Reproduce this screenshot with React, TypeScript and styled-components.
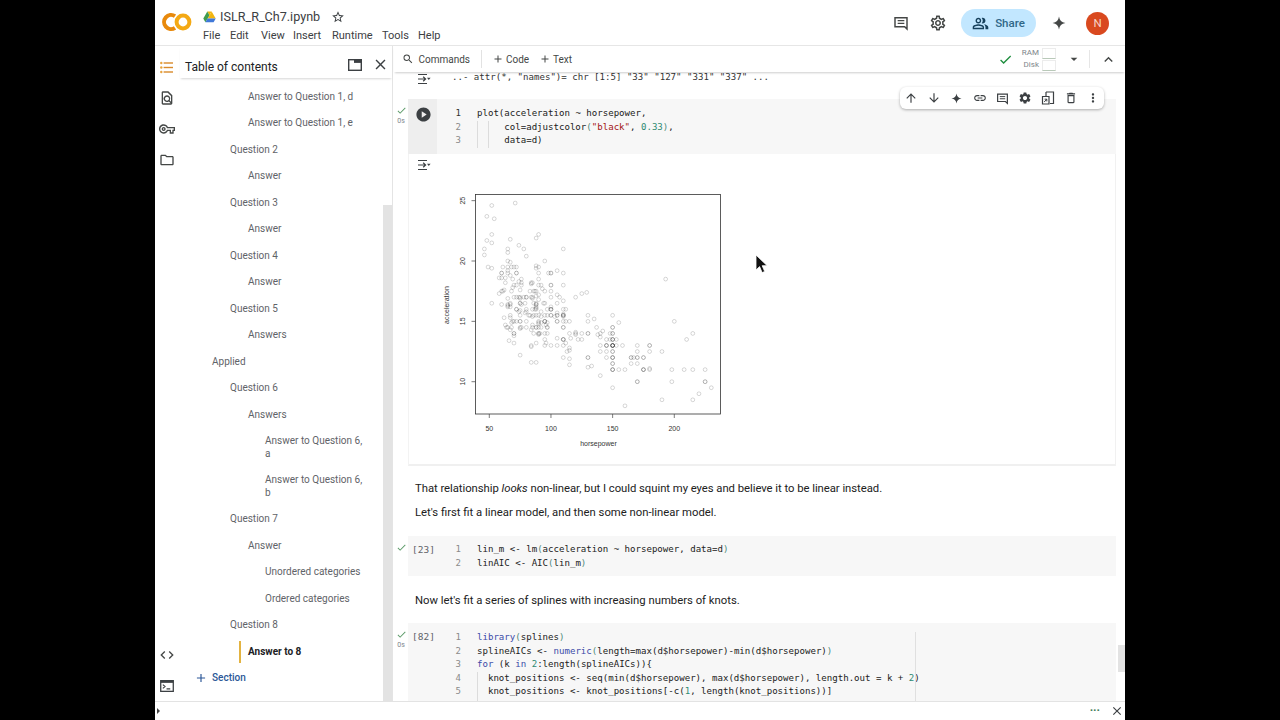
import React from 'react'
import styled, { createGlobalStyle } from 'styled-components'
import {
  MdAdd,
  MdArrowDownward,
  MdArrowDropDown,
  MdArrowUpward,
  MdCheck,
  MdClose,
  MdCode,
  MdKeyboardArrowUp,
  MdLink,
  MdMoreVert,
  MdOutlineDelete,
  MdOutlineFindInPage,
  MdOutlineFolder,
  MdOutlinePeopleAlt,
  MdOutlineSettings,
  MdOutlineVpnKey,
  MdPlayCircle,
  MdSearch,
  MdSettings,
  MdStarBorder
} from 'react-icons/md'

const UI_FONT = `Roboto, "Liberation Sans", sans-serif`
const CODE_FONT = `"DejaVu Sans Mono", "Liberation Mono", monospace`

const GlobalStyle = createGlobalStyle`
  html, body {
    margin: 0;
    height: 100%;
    background: #000;
    overflow: hidden;
  }
`

const Page = styled.div`
  width: 970px;
  height: 720px;
  margin-left: 155px;
  background: #fff;
  display: flex;
  flex-direction: column;
  font-family: ${UI_FONT};
  color: #202124;
  overflow: hidden;
`

/* ---------- header ---------- */

const Header = styled.header`
  height: 46px;
  flex: none;
  display: flex;
  align-items: flex-start;
  border-bottom: 1px solid #e6e6e6;
  box-sizing: border-box;
`
const LogoSlot = styled.div`
  width: 48px;
  flex: none;
  padding: 12px 0 0 7px;
  box-sizing: border-box;
`
const TitleColumn = styled.div`
  display: flex;
  flex-direction: column;
  padding-top: 8px;
`
const TitleRow = styled.div`
  display: flex;
  align-items: center;
  height: 17px;
  gap: 4px;
`
const FileName = styled.span`
  font-size: 12.6px;
  color: #3c4043;
  width: 102px;
`
const StarIcon = styled(MdStarBorder)`
  font-size: 14px;
  color: #3c4043;
  margin-left: 5px;
`
const MenuBar = styled.nav`
  display: flex;
  margin-top: 4px;
`
const MenuItem = styled.span<{ $w: number }>`
  width: ${p => p.$w}px;
  font-size: 11px;
  line-height: 14px;
  color: #3c4043;
`
const HeaderActions = styled.div`
  margin-left: auto;
  display: flex;
  align-items: center;
  height: 46px;
  padding-right: 16px;
`
const HeaderIcon = styled.span<{ $mr: number }>`
  display: inline-flex;
  color: #444746;
  font-size: 18px;
  margin-right: ${p => p.$mr}px;
`
const ShareButton = styled.div`
  width: 75px;
  height: 28px;
  border-radius: 14px;
  background: #c2e7ff;
  display: flex;
  align-items: center;
  justify-content: center;
  gap: 6px;
  font-size: 11.5px;
  font-weight: 500;
  color: #2f6788;
  margin-right: 16px;
  svg {
    font-size: 17px;
    color: #16405c;
  }
`
const Avatar = styled.div`
  width: 23px;
  height: 23px;
  border-radius: 50%;
  background: #d9491f;
  color: #f6d5c8;
  font-size: 11.5px;
  display: flex;
  align-items: center;
  justify-content: center;
  margin-left: 20px;
`

/* ---------- workspace ---------- */

const Workspace = styled.div`
  flex: 1;
  min-height: 0;
  display: flex;
`
const Rail = styled.aside`
  width: 25px;
  flex: none;
  display: flex;
  flex-direction: column;
  align-items: center;
  gap: 15px;
  padding: 13px 2px 7px 0;
  box-sizing: border-box;
  color: #444746;
  font-size: 16px;
`
const RailIcon = styled.span`
  display: flex;
  width: 16px;
  height: 16px;
  align-items: center;
  justify-content: center;
  color: #444746;
`
const RailBottom = styled.div`
  margin-top: auto;
  display: flex;
  flex-direction: column;
  gap: 15px;
`
const TocPanel = styled.section`
  width: 213px;
  flex: none;
  display: flex;
  flex-direction: column;
  border-right: 1px solid #e4e4e4;
  box-sizing: border-box;
`
const TocHeader = styled.div`
  height: 32px;
  flex: none;
  display: flex;
  align-items: center;
  padding: 9px 0 0 5px;
  box-sizing: border-box;
  box-shadow: 0 2px 2px -1px rgba(0, 0, 0, 0.16);
  position: relative;
  z-index: 1;
`
const TocTitle = styled.span`
  font-size: 12px;
  color: #202124;
  margin-right: auto;
`
const TocAction = styled.span<{ $mr: number }>`
  display: inline-flex;
  font-size: 17px;
  color: #3c4043;
  margin: -4px ${p => p.$mr}px 0 0;
`
const TocBody = styled.div`
  flex: 1;
  min-height: 0;
  display: flex;
`
const TocList = styled.div`
  width: 203px;
  flex: none;
  padding: 5px 19px 0 0;
  box-sizing: border-box;
`
const TocItem = styled.div<{ $level: number; $double?: boolean }>`
  min-height: ${p => (p.$double ? 39 : 26.5)}px;
  box-sizing: border-box;
  padding-left: ${p => [32, 50, 68, 85][p.$level]}px;
  display: flex;
  align-items: center;
  font-size: 10px;
  line-height: 13px;
  color: #5f6368;
`
const ActiveLabel = styled.span`
  font-weight: 700;
  color: #202124;
  border-left: 2px solid #e3b341;
  margin: 1px 0 0 -9px;
  padding-left: 7px;
  line-height: 22px;
`
const AddSection = styled.div`
  height: 26px;
  display: flex;
  align-items: center;
  gap: 4px;
  padding-left: 14px;
  font-size: 10px;
  font-weight: 500;
  color: #2b5797;
  svg {
    font-size: 14px;
  }
`
const TocScrollTrack = styled.div`
  width: 9px;
  flex: none;
  padding-top: 127px;
  box-sizing: border-box;
`
const TocScrollThumb = styled.div`
  height: 100%;
  background: #e3e3e3;
`

/* ---------- notebook ---------- */

const Notebook = styled.main`
  flex: 1;
  min-width: 0;
  display: flex;
  flex-direction: column;
  position: relative;
  margin-left: 1px;
`
const Toolbar = styled.div`
  height: 26px;
  flex: none;
  display: flex;
  align-items: center;
  padding: 0 8px;
  box-shadow: 0 2px 2px -1px rgba(0, 0, 0, 0.2);
  position: relative;
  z-index: 2;
  background: #fff;
  font-size: 10px;
  color: #444746;
`
const ToolButton = styled.span<{ $w: number }>`
  display: inline-flex;
  align-items: center;
  gap: 2px;
  width: ${p => p.$w}px;
  svg {
    font-size: 12px;
  }
`
const ToolDivider = styled.span`
  width: 1px;
  height: 18px;
  background: #e2e2e2;
  margin-right: 10px;
`
const RuntimeStatus = styled.div`
  margin-left: auto;
  display: flex;
  align-items: center;
  color: #1e8e3e;
`
const Meters = styled.div`
  display: grid;
  grid-template-columns: 18px 14px;
  column-gap: 3px;
  row-gap: 1px;
  margin-left: 8px;
  font-size: 8px;
  line-height: 10px;
  color: #80868b;
  text-align: right;
`
const MeterBar = styled.span`
  height: 9px;
  border: 1px solid #ececec;
  border-bottom-color: #b9c9b9;
`
const ToolCaret = styled.span`
  display: inline-flex;
  font-size: 16px;
  color: #444746;
  margin: 0 7px 0 10px;
`
const ChevronSlot = styled.span`
  display: inline-flex;
  align-items: center;
  justify-content: center;
  height: 18px;
  border-left: 1px solid #e6e6e6;
  padding-left: 10px;
  font-size: 17px;
  color: #444746;
`
const Scroller = styled.div`
  flex: 1;
  min-height: 0;
  overflow: hidden;
`
const OutputStub = styled.div`
  height: 27px;
  display: flex;
  align-items: flex-start;
  padding-left: 23px;
  font-family: ${CODE_FONT};
  font-size: 9.08px;
  line-height: 11px;
  color: #333;
  white-space: pre;
`
const OutputToggle = styled.svg`
  width: 14px;
  height: 14px;
  flex: none;
  margin-right: 21px;
`
const CellRow = styled.div`
  display: flex;
`
const CellStatus = styled.div`
  width: 14px;
  flex: none;
  display: flex;
  flex-direction: column;
  align-items: center;
  padding-top: 5px;
  color: #5b9a68;
  font-size: 11px;
  margin-top: 1px;
`
const RunTime = styled.span`
  font-size: 7px;
  line-height: 7px;
  color: #80868b;
  margin-top: 2px;
`
const CellBody = styled.div`
  width: 708px;
  display: flex;
  background: #f7f7f7;
  position: relative;
`
const CellGutter = styled.div<{ $dark?: boolean }>`
  width: 29px;
  flex: none;
  box-sizing: border-box;
  background: ${p => (p.$dark ? '#eeeeee' : 'transparent')};
  font-family: ${CODE_FONT};
  font-size: 9.5px;
  color: #5f6368;
  padding: 7px 0 0 4px;
  line-height: 13.5px;
  white-space: pre;
  svg {
    display: block;
    font-size: 17px;
    color: #3c4043;
    margin: 0 0 0 2.5px;
  }
`
const LineNumbers = styled.div`
  width: 24px;
  flex: none;
  text-align: right;
  color: #8a8a8a;
  font-family: ${CODE_FONT};
  font-size: 9px;
  line-height: 13.5px;
`
const ActiveNumber = styled.div`
  color: #333;
`
const CodeBlock = styled.pre`
  margin: 0 0 0 16px;
  flex: 1;
  font-family: ${CODE_FONT};
  font-size: 9.08px;
  line-height: 13.5px;
  color: #212121;
`
const CodeArea = styled.div<{ $pt: number; $pb: number }>`
  display: flex;
  flex: 1;
  padding: ${p => p.$pt}px 0 ${p => p.$pb}px;
  overflow: hidden;
`
const RulerLine = styled.span`
  position: absolute;
  left: 507px;
  top: 9px;
  bottom: 0;
  width: 1px;
  background: #e0e0e0;
`
const Guide = styled.span`
  display: inline-block;
  width: 2ch;
  height: 13.5px;
  vertical-align: top;
  box-shadow: inset 1px 0 0 #dcdcdc;
`
const Kw = styled.span`
  color: #3b4ba8;
`
const Str = styled.span`
  color: #a31515;
`
const Num = styled.span`
  color: #2e8a72;
`
const Br = styled.span`
  color: #4f8a7a;
`
const OutputPanel = styled.div`
  width: 708px;
  height: 312px;
  box-sizing: border-box;
  border-right: 1px solid #f1f1f1;
  border-left: 1px solid #f3f3f3;
  border-bottom: 2px solid #f0f0f0;
  margin-left: 14px;
  padding: 4px 0 0 8px;
  display: flex;
  flex-direction: column;
`
const PlotFrame = styled.svg`
  display: block;
  margin: 13px 0 0 26px;
  flex: none;
`
const Prose = styled.div<{ $pt: number; $pb: number }>`
  padding: ${p => p.$pt}px 0 ${p => p.$pb}px 21px;
  font-size: 11.3px;
  line-height: 16px;
  color: #212121;
`
const ProseLine = styled.p<{ $tight?: boolean }>`
  margin: 0 0 8px;
  letter-spacing: ${p => (p.$tight ? '-0.04px' : 'normal')};
  &:last-child {
    margin-bottom: 0;
  }
`
const CellToolbar = styled.div`
  position: absolute;
  top: 41px;
  right: 21px;
  width: 204px;
  height: 22px;
  box-sizing: border-box;
  background: #fff;
  border-radius: 6px;
  box-shadow: 0 1px 3px rgba(0, 0, 0, 0.3);
  display: grid;
  grid-template-columns: repeat(9, 22.75px);
  align-items: center;
  justify-items: center;
  color: #3c4043;
  font-size: 14px;
  z-index: 3;
`
const ToolbarGlyph = styled.span`
  display: inline-flex;
`
const NotebookScrollThumb = styled.div`
  position: absolute;
  right: 0;
  top: 599px;
  width: 7px;
  height: 27px;
  background: #e3e3e3;
`
const PointerOverlay = styled.svg`
  position: absolute;
  left: 361px;
  top: 208px;
  z-index: 4;
`

/* ---------- status bar ---------- */

const StatusBar = styled.footer`
  height: 19px;
  flex: none;
  display: flex;
  align-items: center;
  border-top: 1px solid #e3e3e3;
  box-sizing: border-box;
  padding: 0 1px 0 2px;
`
const StatusCaret = styled.span`
  width: 0;
  height: 0;
  border-left: 3px solid #444;
  border-top: 3px solid transparent;
  border-bottom: 3px solid transparent;
`
const StatusDots = styled.span`
  margin-left: auto;
  color: #3d7a58;
  font-size: 8px;
  font-weight: 700;
  letter-spacing: 0.5px;
  margin-right: 10px;
  line-height: 10px;
`
const StatusClose = styled.span`
  display: inline-flex;
  font-size: 14px;
  color: #3c4043;
`

/* ---------- drawings ---------- */

const ColabLogo = () => (
  <svg width="30" height="20" viewBox="0 0 30 20">
    <path d="M13 4.2a7 7 0 1 0 0 11.6" fill="none" stroke="#e8890c" strokeWidth="4" />
    <circle cx="21" cy="10" r="6.4" fill="none" stroke="#f4a914" strokeWidth="4" />
  </svg>
)

const DriveIcon = () => (
  <svg width="13" height="12" viewBox="0 0 13 12">
    <polygon points="4.3,0.5 8.7,0.5 6.5,4.4 " fill="#f2b50f" />
    <polygon points="4.3,0.5 0.3,7.6 2.4,11.2 6.5,4.4" fill="#3f9c4f" />
    <polygon points="8.7,0.5 12.7,7.6 4.6,7.6 6.5,4.4" fill="#f2b50f" />
    <polygon points="2.4,11.2 10.6,11.2 12.7,7.6 4.5,7.6" fill="#3f78d8" />
  </svg>
)

const Spark = ({ size }: { size: number }) => (
  <svg width={size} height={size} viewBox="0 0 24 24">
    <path d="M12 1C12.8 7.5 16.5 11.2 23 12C16.5 12.8 12.8 16.5 12 23C11.2 16.5 7.5 12.8 1 12C7.5 11.2 11.2 7.5 12 1Z" fill="currentColor" />
  </svg>
)

const CommentIcon = ({ size }: { size: number }) => (
  <svg width={size} height={size} viewBox="0 0 24 24" fill="none" stroke="currentColor" strokeWidth="2.2">
    <path d="M3 4h18v17l-3.5-3.5H3z" />
    <path d="M7 8.5h10M7 12.5h10" strokeWidth="1.8" />
  </svg>
)

const ListIcon = () => (
  <svg width="13" height="13" viewBox="0 0 13 13" fill="#e8a33d">
    <circle cx="1.3" cy="2" r="1.2" />
    <circle cx="1.3" cy="6.5" r="1.2" />
    <circle cx="1.3" cy="11" r="1.2" />
    <rect x="3.6" y="1.3" width="9.4" height="1.4" fill="#d98a2b" />
    <rect x="3.6" y="5.8" width="9.4" height="1.4" fill="#d98a2b" />
    <rect x="3.6" y="10.3" width="9.4" height="1.4" fill="#d98a2b" />
  </svg>
)

const TerminalIcon = () => (
  <svg width="14" height="12" viewBox="0 0 15 13">
    <rect x="0.7" y="0.7" width="13.6" height="11.6" fill="none" stroke="#3c4043" strokeWidth="1.4" />
    <rect x="0.7" y="0.7" width="13.6" height="2.4" fill="#3c4043" />
    <path d="M3 5l2.4 2L3 9M7 9.6h4" fill="none" stroke="#3c4043" strokeWidth="1.2" />
  </svg>
)

const TabIcon = () => (
  <svg width="14" height="12" viewBox="0 0 14 12">
    <rect x="0.7" y="0.7" width="12.6" height="10.6" fill="none" stroke="#3c4043" strokeWidth="1.4" />
    <rect x="6" y="0.7" width="7.3" height="3.2" fill="#3c4043" />
  </svg>
)

const MirrorIcon = () => (
  <svg width="14" height="14" viewBox="0 0 14 14" fill="none" stroke="currentColor" strokeWidth="1.2">
    <path d="M5 1h7.5v11.5H9M5 1v4.5M1.5 5.5H8V13H1.5z" />
    <path d="M3.2 11l2.6-2.8M3.6 8.2h2.2v2.2" strokeWidth="1" />
  </svg>
)

const OutputIcon = () => (
  <OutputToggle viewBox="0 0 14 14" fill="none" stroke="#3c4043" strokeWidth="1.2">
    <path d="M1 2.5h9M1 11.5h9M1 7h7.5M6.2 4.7L8.6 7 6.2 9.3" />
    <path d="M10 5.8h3.6L11.8 8z" fill="#3c4043" stroke="none" />
  </OutputToggle>
)

/* ---------- data ---------- */

const MENU: [string, number][] = [
  ['File', 27],
  ['Edit', 31],
  ['View', 32],
  ['Insert', 39],
  ['Runtime', 50],
  ['Tools', 36],
  ['Help', 30]
]

const TOC: { text: string; level: number; double?: boolean; active?: boolean }[] = [
  { text: 'Answer to Question 1, d', level: 2 },
  { text: 'Answer to Question 1, e', level: 2 },
  { text: 'Question 2', level: 1 },
  { text: 'Answer', level: 2 },
  { text: 'Question 3', level: 1 },
  { text: 'Answer', level: 2 },
  { text: 'Question 4', level: 1 },
  { text: 'Answer', level: 2 },
  { text: 'Question 5', level: 1 },
  { text: 'Answers', level: 2 },
  { text: 'Applied', level: 0 },
  { text: 'Question 6', level: 1 },
  { text: 'Answers', level: 2 },
  { text: 'Answer to Question 6, a', level: 3, double: true },
  { text: 'Answer to Question 6, b', level: 3, double: true },
  { text: 'Question 7', level: 1 },
  { text: 'Answer', level: 2 },
  { text: 'Unordered categories', level: 3 },
  { text: 'Ordered categories', level: 3 },
  { text: 'Question 8', level: 1 },
  { text: 'Answer to 8', level: 2, active: true }
]

// horsepower,acceleration as read off the plot
const POINTS = `130,12 165,11.5 150,11 150,12 140,10.5 198,10 220,9 215,8.5 225,10 190,8.5 170,10 160,8 150,9.5 225,10 95,15 95,15.5
97,15.5 85,16 88,14.5 46,20.5 87,17.5 90,14.5 95,17.5 113,12.5 90,15 215,14 200,15 210,13.5 193,18.5 88,14.5 90,15.5 95,14 100,13
105,15.5 100,15.5 88,15.5 100,15.5 165,12 175,11 153,13.5 150,13.5 180,11 170,11.5 175,12 110,12 72,19 86,14 90,14 70,14 76,14.5 65,14.5
69,15 60,19 70,18 95,20 80,17 54,23.5 90,19.5 86,16.5 165,12 175,12 150,13 153,13 150,14.5 208,11 155,11 160,11 190,12.5 97,14.5 150,13
130,14 140,12.5 150,13 112,16 76,18 87,16 69,18.5 86,15.5 92,14.5 97,14 80,15 88,16 175,11 150,11.5 145,13 137,14.5 150,14 198,11
150,12.5 158,13 150,13 215,11 225,11 175,11 105,16.5 100,18 100,16 88,16.5 95,15 46,21 150,13 167,12 170,12 180,13 100,16 88,17.5
72,19 94,16.5 90,18.5 85,14.5 107,17 90,14 145,13.5 230,9.5 49,19.5 75,15.5 91,14 112,15 150,11 110,13.5 122,13.5 180,12.5 95,16.5 100,17
100,16 67,15.5 80,16 65,19 75,15 100,19 110,18 105,15 140,13 150,11.5 150,12 170,12.5 130,14 150,12.5 95,13.5 90,19 97,16 52,21.5 67,21.8
65,19.5 75,14.5 75,16.5 100,17.5 110,15 105,17.2 140,14 150,13.5 150,14 170,13 145,12.5 150,12 148,14 130,15 110,13 105,15.5 72,18 72,16
170,12 145,13 150,14.5 148,13.5 110,16 105,15 110,15.5 95,15 110,14.5 110,13.5 72,17 60,19 48,21.7 52,22.2 61,17.5 75,16.5 75,17 75,16.9
97,14.9 93,17.7 67,15.3 95,13 105,13 72,15 72,16 170,10 145,12 150,13.5 180,11.1 130,12 150,11 68,19.5 80,14.5 58,18.6 96,13.2 70,19.5 145,13
110,19 90,18 110,15.5 52,16.5 83,15.5 70,14 129,17.4 120,17 110,15.5 150,13 130,15.5 83,17.5 100,18 78,21 65,16.2 69,17.8 61,19.5 70,15
63,14.7 67,16.4 78,17 97,14.5 110,13.5 110,21 48,23.7 66,13.4 52,24.6 70,17 60,16.4 110,14.5 125,14 115,14 135,15.2 85,16.9 88,11.6 90,14.9
88,13.2 84,11.6 84,12.9 92,15.8 110,15.4 84,13 58,17.3 64,14.5 60,17.5 67,16.2 65,16.3 62,15.3 68,14.9 63,18.6 65,16.4 65,16.9 74,17 75,15.9
75,14.4 100,16.2 74,15.8 80,17 76,16.4 116,13.6 120,13.9 110,15.6 105,15.7 88,16.4 85,15.4 88,16.1 88,16.4 88,19.4 85,17 84,17 90,14.8 92,14.9
74,18.3 68,14.5 68,17.5 63,18.2 70,13.8 88,19.6 75,12.2 70,13.2 67,19.9 67,14.3 67,16.5 110,16.7 85,14.7 92,15.4 112,13.2 96,14.7 84,18.1 90,13.9
86,17.5 52,19.4 84,14.3 79,15.7 82,15.5 71,24.8 90,22.2 88,21.9 74,21.3 67,18.8 65,20.7 76,18.5 88,16.2 65,21 80,20.4 60,18.6 92,18 79,16.5
65,19.2 72,19.5 115,12.6 90,17.2 88,17.1 90,16.8 115,12.8 76,18.2 75,17.6 62,17.6 150,15.5 105,13.6 103,15.4 125,17.3 133,11.3 105,19.2 80,15.8
115,11.4 84,18.2 98,19 130,11.2 115,11.9 120,14.1 120,14 180,13 115,15 142,14.2 125,13.5 140,13.7 155,14.9 138,13.9 100,19 85,18.2 65,20 75,15`
  .split(/\s+/)
  .map(pair => pair.split(',').map(Number))

const hpX = (hp: number) => 46.3 + (hp - 50) * 1.2333
const accY = (acc: number) => 196.7 - (acc - 10) * 12.07
const BOX = { x: 32.5, y: 9.5, w: 245, h: 219.5 }

const ScatterPlot = () => (
  <PlotFrame width="282" height="270" viewBox="0 0 282 270">
    {POINTS.map(([hp, acc], i) => (
      <circle key={i} cx={hpX(hp)} cy={accY(acc)} r="1.9" fill="none" stroke="rgba(0,0,0,0.2)" strokeWidth="0.8" />
    ))}
    <rect x={BOX.x} y={BOX.y} width={BOX.w} height={BOX.h} fill="none" stroke="#333" strokeWidth="0.8" />
    <g stroke="#444" strokeWidth="0.7">
      {[50, 100, 150, 200].map(hp => (
        <line key={hp} x1={hpX(hp)} x2={hpX(hp)} y1={BOX.y + BOX.h} y2={BOX.y + BOX.h + 4} />
      ))}
      {[10, 15, 20, 25].map(acc => (
        <line key={acc} x1={BOX.x - 4} x2={BOX.x} y1={accY(acc)} y2={accY(acc)} />
      ))}
    </g>
    <g fontFamily="Liberation Sans, sans-serif" fontSize="7" fill="#333" textAnchor="middle">
      {[50, 100, 150, 200].map(hp => (
        <text key={hp} x={hpX(hp)} y="245.5">
          {hp}
        </text>
      ))}
      {[10, 15, 20, 25].map(acc => (
        <text key={acc} transform={`translate(22 ${accY(acc)}) rotate(-90)`}>
          {acc}
        </text>
      ))}
      <text x="155.5" y="261">
        horsepower
      </text>
      <text transform="translate(5.5 120) rotate(-90)">acceleration</text>
    </g>
  </PlotFrame>
)

const Numbers = ({ count, active }: { count: number; active?: number }) => (
  <LineNumbers>
    {Array.from({ length: count }, (_, i) =>
      i + 1 === active ? <ActiveNumber key={i}>{i + 1}</ActiveNumber> : <div key={i}>{i + 1}</div>
    )}
  </LineNumbers>
)

export default function App() {
  return (
    <Page>
      <GlobalStyle />
      <Header>
        <LogoSlot>
          <ColabLogo />
        </LogoSlot>
        <TitleColumn>
          <TitleRow>
            <DriveIcon />
            <FileName>ISLR_R_Ch7.ipynb</FileName>
            <StarIcon />
          </TitleRow>
          <MenuBar>
            {MENU.map(([label, w]) => (
              <MenuItem key={label} $w={w}>
                {label}
              </MenuItem>
            ))}
          </MenuBar>
        </TitleColumn>
        <HeaderActions>
          <HeaderIcon $mr={20}>
            <CommentIcon size={16} />
          </HeaderIcon>
          <HeaderIcon $mr={14}>
            <MdOutlineSettings />
          </HeaderIcon>
          <ShareButton>
            <MdOutlinePeopleAlt />
            Share
          </ShareButton>
          <HeaderIcon $mr={0}>
            <Spark size={14} />
          </HeaderIcon>
          <Avatar>N</Avatar>
        </HeaderActions>
      </Header>

      <Workspace>
        <Rail>
          <RailIcon>
            <ListIcon />
          </RailIcon>
          <RailIcon>
            <MdOutlineFindInPage />
          </RailIcon>
          <RailIcon>
            <MdOutlineVpnKey />
          </RailIcon>
          <RailIcon>
            <MdOutlineFolder />
          </RailIcon>
          <RailBottom>
            <RailIcon>
              <MdCode />
            </RailIcon>
            <RailIcon>
              <TerminalIcon />
            </RailIcon>
          </RailBottom>
        </Rail>

        <TocPanel>
          <TocHeader>
            <TocTitle>Table of contents</TocTitle>
            <TocAction $mr={10}>
              <TabIcon />
            </TocAction>
            <TocAction $mr={3}>
              <MdClose />
            </TocAction>
          </TocHeader>
          <TocBody>
            <TocList>
              {TOC.map((item, i) => (
                <TocItem key={i} $level={item.level} $double={item.double}>
                  {item.active ? <ActiveLabel>{item.text}</ActiveLabel> : item.text}
                </TocItem>
              ))}
              <AddSection>
                <MdAdd />
                Section
              </AddSection>
            </TocList>
            <TocScrollTrack>
              <TocScrollThumb />
            </TocScrollTrack>
          </TocBody>
        </TocPanel>

        <Notebook>
          <Toolbar>
            <ToolButton $w={79}>
              <MdSearch />
              &nbsp;Commands
            </ToolButton>
            <ToolDivider />
            <ToolButton $w={47}>
              <MdAdd />
              Code
            </ToolButton>
            <ToolButton $w={40}>
              <MdAdd />
              Text
            </ToolButton>
            <RuntimeStatus>
              <MdCheck size={15} />
              <Meters>
                <span>RAM</span>
                <MeterBar />
                <span>Disk</span>
                <MeterBar />
              </Meters>
              <ToolCaret>
                <MdArrowDropDown />
              </ToolCaret>
              <ChevronSlot>
                <MdKeyboardArrowUp />
              </ChevronSlot>
            </RuntimeStatus>
          </Toolbar>

          <CellToolbar>
            <ToolbarGlyph>
              <MdArrowUpward />
            </ToolbarGlyph>
            <ToolbarGlyph>
              <MdArrowDownward />
            </ToolbarGlyph>
            <ToolbarGlyph>
              <Spark size={11} />
            </ToolbarGlyph>
            <ToolbarGlyph>
              <MdLink />
            </ToolbarGlyph>
            <ToolbarGlyph>
              <CommentIcon size={13} />
            </ToolbarGlyph>
            <ToolbarGlyph>
              <MdSettings />
            </ToolbarGlyph>
            <ToolbarGlyph>
              <MirrorIcon />
            </ToolbarGlyph>
            <ToolbarGlyph>
              <MdOutlineDelete />
            </ToolbarGlyph>
            <ToolbarGlyph>
              <MdMoreVert />
            </ToolbarGlyph>
          </CellToolbar>

          <Scroller>
            <OutputStub>
              <OutputIcon />
              {'..- attr(*, "names")= chr [1:5] "33" "127" "331" "337" ...'}
            </OutputStub>

            <CellRow>
              <CellStatus>
                <MdCheck />
                <RunTime>0s</RunTime>
              </CellStatus>
              <CellBody>
                <CellGutter $dark>
                  <MdPlayCircle />
                </CellGutter>
                <CodeArea $pt={8} $pb={6.5}>
                  <Numbers count={3} active={1} />
                  <CodeBlock>
                    {'plot(acceleration ~ horsepower,\n'}
                    <Guide />
                    <Guide />
                    {' col=adjustcolor'}
                    <Br>(</Br>
                    <Str>"black"</Str>
                    {', '}
                    <Num>0.33</Num>
                    <Br>)</Br>
                    {',\n'}
                    <Guide />
                    <Guide />
                    {' data=d)'}
                  </CodeBlock>
                </CodeArea>
              </CellBody>
            </CellRow>

            <OutputPanel>
              <OutputIcon />
              <ScatterPlot />
            </OutputPanel>

            <Prose $pt={15} $pb={15}>
              <ProseLine $tight>
                That relationship <em>looks</em> non-linear, but I could squint my eyes and believe it to be linear
                instead.
              </ProseLine>
              <ProseLine>Let's first fit a linear model, and then some non-linear model.</ProseLine>
            </Prose>

            <CellRow>
              <CellStatus>
                <MdCheck />
              </CellStatus>
              <CellBody>
                <CellGutter>[23]</CellGutter>
                <CodeArea $pt={7} $pb={6}>
                  <Numbers count={2} />
                  <CodeBlock>
                    {'lin_m <- lm'}
                    <Br>(</Br>
                    {'acceleration ~ horsepower, data=d'}
                    <Br>)</Br>
                    {'\nlinAIC <- AIC'}
                    <Br>(</Br>
                    {'lin_m'}
                    <Br>)</Br>
                  </CodeBlock>
                </CodeArea>
              </CellBody>
            </CellRow>

            <Prose $pt={17} $pb={14}>
              <ProseLine>Now let's fit a series of splines with increasing numbers of knots.</ProseLine>
            </Prose>

            <CellRow>
              <CellStatus>
                <MdCheck />
                <RunTime>0s</RunTime>
              </CellStatus>
              <CellBody>
                <CellGutter>[82]</CellGutter>
                <CodeArea $pt={8} $pb={0}>
                  <Numbers count={6} />
                  <CodeBlock>
                    <Kw>library</Kw>
                    <Br>(</Br>
                    {'splines'}
                    <Br>)</Br>
                    {'\nsplineAICs <- '}
                    <Kw>numeric</Kw>
                    <Br>(</Br>
                    {'length=max(d$horsepower)-min(d$horsepower)'}
                    <Br>)</Br>
                    {'\n'}
                    <Kw>for</Kw>
                    {' (k '}
                    <Kw>in</Kw>
                    {' '}
                    <Num>2</Num>
                    {':length(splineAICs)){\n'}
                    <Guide />
                    {'knot_positions <- seq(min(d$horsepower), max(d$horsepower), length.out = k + '}
                    <Num>2</Num>
                    {')\n'}
                    <Guide />
                    {'knot_positions <- knot_positions[-c('}
                    <Num>1</Num>
                    {', length(knot_positions))]\n'}
                    <Guide />
                    {'spline_fit <- lm(acceleration ~ bs(horsepower, knots=knot_positions), data=d)'}
                  </CodeBlock>
                </CodeArea>
                <RulerLine />
              </CellBody>
            </CellRow>
          </Scroller>
          <NotebookScrollThumb />
          <PointerOverlay width="13" height="20" viewBox="0 0 13 20">
            <path d="M1 1v15l3.6-3.4 2.5 6 2.6-1.1-2.5-5.8h5z" fill="#111" stroke="#fff" strokeWidth="0.8" />
          </PointerOverlay>
        </Notebook>
      </Workspace>

      <StatusBar>
        <StatusCaret />
        <StatusDots>•••</StatusDots>
        <StatusClose>
          <MdClose />
        </StatusClose>
      </StatusBar>
    </Page>
  )
}
